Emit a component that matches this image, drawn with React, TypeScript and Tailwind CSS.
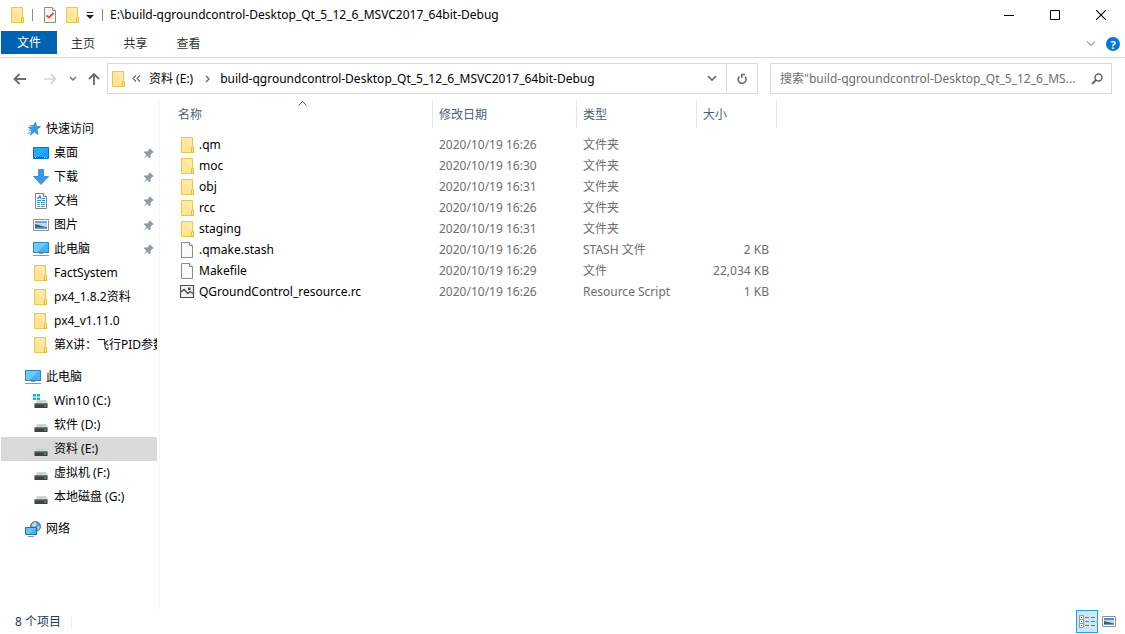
import React from "react";

type IconProps = { className?: string };

const Svg = ({ children, className = "", size = 16 }: { children: React.ReactNode; className?: string; size?: number }) => (
  <svg width={size} height={size} viewBox={`0 0 ${size} ${size}`} fill="none" className={`shrink-0 ${className}`} aria-hidden="true">
    {children}
  </svg>
);

const FolderIcon = ({ className }: IconProps) => (
  <Svg className={className}>
    <path d="M1.5.5h11v10h1v5h-12z" fill="#ffe594" stroke="#eac54f" />
    <path d="M2 1h10v10z" fill="#ffeaa6" />
    <path d="M11.500 15.500v-4.500l1-1 1 1v4.500z" fill="#ffe594" stroke="#e8bd3c" />
  </Svg>
);

const FileIcon = ({ className }: IconProps) => (
  <Svg className={className}>
    <path d="M1.500.5h8l3 3v12h-11z" fill="#f8f9f9" stroke="#8c8c8c" />
    <path d="M9.500.5v3h3" fill="#fff" stroke="#8c8c8c" />
  </Svg>
);

const ResourceIcon = () => (
  <Svg>
    <path d="M.5 1.500h13v12H.5z" fill="#f2f2f4" stroke="#4c4c54" strokeWidth="1.200" />
    <path d="M1 8l3-2.500 4 4 2-2 3.500 2.500" stroke="#4c4c54" strokeWidth="1.300" />
    <path d="M8 3.500h2.500V6H8z" fill="#4c4c54" />
  </Svg>
);

const CheckedFileIcon = () => (
  <Svg>
    <path d="M2.500.5h8l3 3v12h-11z" fill="#f4f6f8" stroke="#8c8c8c" />
    <path d="M10.500.5v3h3" fill="#fff" stroke="#8c8c8c" />
    <path d="M4.500 8.500L7 10.500l4.500-4.500" stroke="#e8541a" strokeWidth="1.800" />
  </Svg>
);

const StarIcon = () => (
  <Svg>
    <path d="M10.500 1l1 4.500 4 .2-3.500 2.600 1 5.200-3.700-2.700L5.500 14l1.300-4.700L3.500 6.200l4.500-.5z" fill="#2b9fee" stroke="#1b7fc8" strokeWidth=".7" />
    <path d="M5 4.500h3M3 6.500h3M4 9.500h2M2.500 12h3" stroke="#45a9ec" />
  </Svg>
);

const DesktopIcon = () => (
  <Svg>
    <path d="M.5 2.500h15v11H.5z" fill="#18a0fb" stroke="#0873b9" />
    <path d="M1 3h14L5 12H1z" fill="#35adff" opacity=".6" />
    <path d="M1 12.500h14" stroke="#0b659f" />
    <path d="M2 12.500h1M11 12.500h1M13 12.500h1" stroke="#fff" />
  </Svg>
);

const DownloadIcon = () => (
  <Svg>
    <path d="M5.500.5h5v7h5L8 15.500.5 7.500h5z" fill="#3d98e8" stroke="#2f7fcb" strokeWidth=".8" />
  </Svg>
);

const DocumentIcon = () => (
  <Svg>
    <path d="M2.500.5h8l3 3v12h-11z" fill="#fbfbfb" stroke="#7f8386" />
    <path d="M10.500.5v3h3" fill="#fff" stroke="#7f8386" />
    <path d="M4.500 6L7 3l1 3M9 5.500h3M4 7.500h4M9 7.500h3" stroke="#1f8fd6" strokeWidth="1.200" />
    <path d="M4 9.500h3M8 9.500h4" stroke="#2c9adc" />
    <path d="M4 11.500h3M8 11.500h4M4 13.500h3M8 13.500h4" stroke="#6f9fbd" />
  </Svg>
);

const PictureIcon = ({ className }: IconProps) => (
  <Svg className={className}>
    <path d="M.5 2.500h15v11H.5z" fill="#fff" stroke="#8f9295" />
    <path d="M2 4h12v8H2z" fill="#b9dcf6" />
    <path d="M2 4h12v2H2z" fill="#6ba8e2" />
    <path d="M2 7l4 1 4 1.500 4 .5v1H2z" fill="#3f6558" />
    <path d="M2 10.500h12V12H2z" fill="#6d9cc6" />
  </Svg>
);

const ComputerIcon = () => (
  <Svg>
    <path d="M.5 1.500h15v10H.5z" fill="#45b3f7" stroke="#3980ac" />
    <path d="M1 2h13L4 11H1z" fill="#82d0ff" opacity=".7" />
    <path d="M6 12h4v1H6z" fill="#8da3b2" />
    <path d="M0 14.500h16" stroke="#8299a8" />
  </Svg>
);

const DriveBody = () => (
  <>
    <path d="M4 7h9l2 4H2z" fill="#d0d2d5" />
    <path d="M1.500 10.500h13V15h-13z" fill="#3e4145" />
    <path d="M1.500 11h13" stroke="#6d7073" />
    <path d="M11 12.500h2v1h-2z" fill="#35e64b" />
  </>
);

const DriveIcon = () => (
  <Svg>
    <DriveBody />
  </Svg>
);

const SystemDriveIcon = () => (
  <Svg>
    <DriveBody />
    <path d="M0 1h3v2.500H0zM4 1h3v2.500H4zM0 4.500h3V7H0zM4 4.500h3V7H4z" fill="#10b5ee" />
  </Svg>
);

const NetworkIcon = () => (
  <Svg>
    <circle cx="10.500" cy="5.500" r="5" fill="#5c9dc4" stroke="#487f9f" />
    <path d="M7 3l3-2 2 2-2 3-3-1zM12 5l3 1-2 3z" fill="#b8dcea" />
    <path d="M.5 6.500h11v7H.5z" fill="#41b1f5" stroke="#28719d" />
    <path d="M1 7h10l-7 6H1z" fill="#7bd0ff" opacity=".6" />
    <path d="M3 15.500h6" stroke="#8299a8" />
  </Svg>
);

const PinIcon = () => (
  <Svg size={12} className="ml-auto">
    <path d="M6.500 1l4.500 4.500-1.500.3-2 2 .2 2.400-1 1-2.400-2.500L.5 11.500l2.800-3.800L1 5.300l1-1 2.400.2 2-2z" fill="#8d99a3" />
  </Svg>
);

type NavEntry = { label: string; icon: React.ReactNode; pinned?: boolean; current?: boolean };
type NavGroup = NavEntry & { items: NavEntry[] };

const groups: NavGroup[] = [
  {
    label: "快速访问",
    icon: <StarIcon />,
    items: [
      { label: "桌面", icon: <DesktopIcon />, pinned: true },
      { label: "下载", icon: <DownloadIcon />, pinned: true },
      { label: "文档", icon: <DocumentIcon />, pinned: true },
      { label: "图片", icon: <PictureIcon />, pinned: true },
      { label: "此电脑", icon: <ComputerIcon />, pinned: true },
      { label: "FactSystem", icon: <FolderIcon /> },
      { label: "px4_1.8.2资料", icon: <FolderIcon /> },
      { label: "px4_v1.11.0", icon: <FolderIcon /> },
      { label: "第X讲：飞行PID参数", icon: <FolderIcon /> },
    ],
  },
  {
    label: "此电脑",
    icon: <ComputerIcon />,
    items: [
      { label: "Win10 (C:)", icon: <SystemDriveIcon /> },
      { label: "软件 (D:)", icon: <DriveIcon /> },
      { label: "资料 (E:)", icon: <DriveIcon />, current: true },
      { label: "虚拟机 (F:)", icon: <DriveIcon /> },
      { label: "本地磁盘 (G:)", icon: <DriveIcon /> },
    ],
  },
  { label: "网络", icon: <NetworkIcon />, items: [] },
];

const files = [
  { name: ".qm", date: "2020/10/19 16:26", type: "文件夹", size: "", icon: <FolderIcon /> },
  { name: "moc", date: "2020/10/19 16:30", type: "文件夹", size: "", icon: <FolderIcon /> },
  { name: "obj", date: "2020/10/19 16:31", type: "文件夹", size: "", icon: <FolderIcon /> },
  { name: "rcc", date: "2020/10/19 16:26", type: "文件夹", size: "", icon: <FolderIcon /> },
  { name: "staging", date: "2020/10/19 16:31", type: "文件夹", size: "", icon: <FolderIcon /> },
  { name: ".qmake.stash", date: "2020/10/19 16:26", type: "STASH 文件", size: "2 KB", icon: <FileIcon /> },
  { name: "Makefile", date: "2020/10/19 16:29", type: "文件", size: "22,034 KB", icon: <FileIcon /> },
  { name: "QGroundControl_resource.rc", date: "2020/10/19 16:26", type: "Resource Script", size: "1 KB", icon: <ResourceIcon /> },
];

function NavLink({ entry, child }: { entry: NavEntry; child?: boolean }) {
  return (
    <a
      href="#"
      aria-current={entry.current ? "location" : undefined}
      className={`flex h-6 items-center gap-[5px] overflow-hidden whitespace-nowrap ${child ? "pl-8" : "pl-6"} ${entry.pinned ? "pr-[2px]" : ""} ${entry.current ? "bg-[#d9d9d9]" : "hover:bg-[#e5f3ff]"}`}
    >
      {entry.icon}
      <span>{entry.label}</span>
      {entry.pinned && <PinIcon />}
    </a>
  );
}

function TitleBar() {
  return (
    <header className="flex h-[31px] items-center pr-px pb-px">
      <div className="flex min-w-0 flex-1 items-center pl-[10px]">
        <FolderIcon />
        <span className="ml-[6px] h-3 w-px bg-[#8c8c8c]" />
        <button type="button" aria-label="属性" className="ml-[9px]"><CheckedFileIcon /></button>
        <button type="button" aria-label="新建文件夹" className="ml-[7px]"><FolderIcon /></button>
        <button type="button" aria-label="自定义快速访问工具栏" className="ml-[5px]">
          <svg width="8" height="8" viewBox="0 0 8 8" aria-hidden="true"><path d="M1 1h6v1H1zM0 4h8L4 8z" fill="#222" /></svg>
        </button>
        <span className="ml-2 h-3 w-px bg-[#8c8c8c]" />
        <h1 className="ml-[7px] truncate">E:\build-qgroundcontrol-Desktop_Qt_5_12_6_MSVC2017_64bit-Debug</h1>
      </div>
      <div className="flex h-full">
        <button type="button" aria-label="最小化" className="flex w-[46px] items-center justify-center hover:bg-gray-200">
          <svg width="10" height="10" viewBox="0 0 10 10" aria-hidden="true"><path d="M0 5.500h10" stroke="#000" /></svg>
        </button>
        <button type="button" aria-label="最大化" className="flex w-[46px] items-center justify-center hover:bg-gray-200">
          <svg width="10" height="10" viewBox="0 0 10 10" aria-hidden="true"><path d="M.5.5h9v9h-9z" fill="none" stroke="#000" /></svg>
        </button>
        <button type="button" aria-label="关闭" className="flex w-[46px] items-center justify-center hover:bg-gray-200">
          <svg width="10" height="10" viewBox="0 0 10 10" aria-hidden="true"><path d="M0 0l10 10M10 0L0 10" stroke="#000" strokeWidth="1.100" /></svg>
        </button>
      </div>
    </header>
  );
}

function Ribbon() {
  return (
    <nav aria-label="功能区" className="flex h-[27px] items-start border-b border-[#dadbdc] pl-px text-[#333]">
      <button type="button" className="h-[23px] w-14 bg-[#0063b1] pt-px text-white">文件</button>
      <button type="button" className="h-[25px] w-[52px]">主页</button>
      <button type="button" className="h-[25px] w-[53px]">共享</button>
      <button type="button" className="h-[25px] w-[53px]">查看</button>
      <button type="button" aria-label="展开功能区" className="ml-auto flex h-[26px] items-center">
        <svg width="10" height="6" viewBox="0 0 10 6" fill="none" aria-hidden="true"><path d="M1 .5l4 4 4-4" stroke="#a0a0a0" strokeWidth="1.200" /></svg>
      </button>
      <button type="button" aria-label="帮助" className="mr-[5px] ml-[10px] flex h-[26px] items-center">
        <span className="flex h-[14px] w-[14px] items-center justify-center rounded-full bg-[#0078d7] text-[11px] leading-none font-bold text-white">?</span>
      </button>
    </nav>
  );
}

function AddressRow() {
  return (
    <div className="flex h-10 items-center pt-px pr-[13px] pl-[13px]">
      <button type="button" aria-label="后退">
        <svg width="14" height="12" viewBox="0 0 14 12" fill="none" aria-hidden="true"><path d="M13 6H2M6.500 1L1.500 6l5 5" stroke="#6b6b6b" strokeWidth="1.800" /></svg>
      </button>
      <button type="button" aria-label="前进" className="ml-4">
        <svg width="14" height="12" viewBox="0 0 14 12" fill="none" aria-hidden="true"><path d="M1 6h11M7.500 1l5 5-5 5" stroke="#d4d4d4" strokeWidth="1.600" /></svg>
      </button>
      <button type="button" aria-label="最近浏览的位置" className="ml-3">
        <svg width="8" height="6" viewBox="0 0 8 6" fill="none" aria-hidden="true"><path d="M1 1l3 3 3-3" stroke="#777" strokeWidth="1.500" /></svg>
      </button>
      <button type="button" aria-label="上移" className="ml-[11px]">
        <svg width="12" height="14" viewBox="0 0 12 14" fill="none" aria-hidden="true"><path d="M6 13V2M1 7l5-5 5 5" stroke="#6b6b6b" strokeWidth="1.800" /></svg>
      </button>
      <div className="ml-[7px] flex h-[31px] min-w-0 flex-1 items-center border border-[#d9d9d9] pl-[3px]">
        <FolderIcon />
        <svg width="9" height="7" viewBox="0 0 9 7" fill="none" className="ml-[5px] shrink-0" aria-hidden="true"><path d="M4 .5l-3 3 3 3M8 .5l-3 3 3 3" stroke="#666" strokeWidth="1.100" /></svg>
        <button type="button" className="ml-2 shrink-0">资料 (E:)</button>
        <svg width="5" height="8" viewBox="0 0 5 8" fill="none" className="ml-3 shrink-0" aria-hidden="true"><path d="M1 1l3 3-3 3" stroke="#666" strokeWidth="1.300" /></svg>
        <button type="button" className="ml-[10px] min-w-0 truncate">build-qgroundcontrol-Desktop_Qt_5_12_6_MSVC2017_64bit-Debug</button>
        <button type="button" aria-label="以前的位置" className="ml-auto flex h-full w-7 shrink-0 items-center justify-center">
          <svg width="10" height="7" viewBox="0 0 10 7" fill="none" aria-hidden="true"><path d="M1 1l4 4 4-4" stroke="#666" strokeWidth="1.600" /></svg>
        </button>
        <button type="button" aria-label="刷新" className="flex h-full w-[31px] shrink-0 items-center justify-center border-l border-[#d9d9d9]">
          <svg width="12" height="12" viewBox="0 0 12 12" fill="none" aria-hidden="true"><path d="M9 3.500A4 4 0 1 1 3.500 3.200" stroke="#666" strokeWidth="1.500" /><path d="M3 1.500h3.200V5" stroke="#666" strokeWidth="1.500" transform="matrix(-1 0 0 1 12 0)" /></svg>
        </button>
      </div>
      <label className="ml-3 flex h-[31px] w-[342px] items-center border border-[#d9d9d9] pr-2 pl-[9px]">
        <input
          type="search"
          aria-label="搜索"
          placeholder={'搜索"build-qgroundcontrol-Desktop_Qt_5_12_6_MS...'}
          className="min-w-0 flex-1 bg-transparent outline-none placeholder:text-[#6d6d6d]"
        />
        <svg width="12" height="12" viewBox="0 0 12 12" fill="none" aria-hidden="true"><circle cx="7.500" cy="4.500" r="3.500" stroke="#666" strokeWidth="1.500" /><path d="M5 7L1 11" stroke="#666" strokeWidth="2" /></svg>
      </label>
    </div>
  );
}

function FileTable() {
  return (
    <table className="w-[617px] table-fixed border-separate border-spacing-0 text-left">
      <colgroup>
        <col className="w-[273px]" />
        <col className="w-36" />
        <col className="w-[120px]" />
        <col className="w-20" />
      </colgroup>
      <thead className="text-[#4c607a]">
        <tr className="h-[27px]">
          <th scope="col" className="relative border-r border-[#e5e5e5] py-0 pl-[18px] font-normal">
            名称
            <svg width="9" height="5" viewBox="0 0 9 5" fill="none" className="absolute top-0 left-[138px]" aria-hidden="true"><path d="M.5 4.500l4-4 4 4" stroke="#555" /></svg>
          </th>
          <th scope="col" className="border-r border-[#e5e5e5] py-0 pl-[6px] font-normal">修改日期</th>
          <th scope="col" className="border-r border-[#e5e5e5] py-0 pl-[6px] font-normal">类型</th>
          <th scope="col" className="border-r border-[#e5e5e5] py-0 pl-[6px] font-normal">大小</th>
        </tr>
      </thead>
      <tbody className="text-[#6d6d6d]">
        <tr className="h-[6px]" aria-hidden="true"><td colSpan={4} className="p-0" /></tr>
        {files.map((file) => (
          <tr key={file.name} className="h-[21px] hover:bg-[#e5f3ff]">
            <td className="py-0 pl-5 text-black">
              <a href="#" className="flex items-center gap-[3px]">{file.icon}{file.name}</a>
            </td>
            <td className="py-0 pl-[6px]">{file.date}</td>
            <td className="py-0 pl-[6px]">{file.type}</td>
            <td className="py-0 pr-2 text-right">{file.size}</td>
          </tr>
        ))}
      </tbody>
    </table>
  );
}

export default function App() {
  return (
    <div className="flex min-h-screen flex-col bg-white font-['Noto_Sans','Noto_Sans_CJK_SC',sans-serif] text-[12px] leading-4 text-black">
      <TitleBar />
      <Ribbon />
      <AddressRow />
      <div className="mt-[3px] flex flex-1">
        <aside className="flex w-40 shrink-0 flex-col gap-2 border-r border-[#f3f3f3] pt-4 pr-[2px] pl-px">
          {groups.map((group) => (
            <div key={group.label}>
              <NavLink entry={group} />
              {group.items.map((item) => <NavLink key={item.label} entry={item} child />)}
            </div>
          ))}
        </aside>
        <main className="min-w-0 flex-1"><FileTable /></main>
      </div>
      <footer className="flex h-[25px] items-center pr-[9px] pl-[15px] text-[#1e395b]">
        <span>8 个项目</span>
        <span className="ml-[10px] h-3 w-px bg-[#f0f0f0]" />
        <div className="ml-auto flex items-center gap-1">
          <button type="button" aria-label="详细信息" aria-pressed="true" className="flex h-[23px] w-[22px] items-center justify-center border border-[#26a0da] bg-[#cbe8f6]">
            <svg width="16" height="13" viewBox="0 0 16 13" fill="none" aria-hidden="true">
              <path d="M.5.5h4v12h-4zM.5 4.500h4M.5 8.500h4" fill="#fff" stroke="#999" />
              <path d="M2 2.500h1M2 6.500h1" stroke="#547" />
              <path d="M2 10.500h1" stroke="#c22" />
              <path d="M6 2.500h4M12 2.500h4M6 6.500h4M12 6.500h4M6 10.500h4M12 10.500h4" stroke="#777" />
            </svg>
          </button>
          <button type="button" aria-label="大缩略图">
            <svg width="14" height="11" viewBox="0 0 14 11" fill="none" aria-hidden="true">
              <path d="M.5.5h13v10H.5z" fill="#fff" stroke="#8f9295" />
              <path d="M2 2h10v7H2z" fill="#b9dcf6" />
              <path d="M2 2h10v2H2z" fill="#4f8dd8" />
              <path d="M2 5l4 1 6 1.500V8H2z" fill="#3f6558" />
              <path d="M2 8h10v1H2z" fill="#6d9cc6" />
            </svg>
          </button>
        </div>
      </footer>
    </div>
  );
}
